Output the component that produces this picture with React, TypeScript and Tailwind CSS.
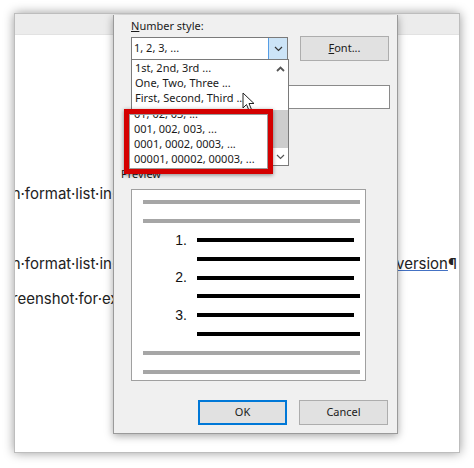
import React from "react";

const LIST_ITEMS = [
  "1st, 2nd, 3rd ...",
  "One, Two, Three ...",
  "First, Second, Third ...",
  "01, 02, 03, ...",
  "001, 002, 003, ...",
  "0001, 0002, 0003, ...",
  "00001, 00002, 00003, ...",
];

const ZOOMED = LIST_ITEMS.slice(3);

function ChevronDown({ className }: { className?: string }) {
  return (
    <svg width="9" height="6" viewBox="0 0 9 6" className={className}>
      <path d="M1 1 L4.5 4.5 L8 1" fill="none" stroke="currentColor" strokeWidth="1.2" />
    </svg>
  );
}

function ChevronUp({ className }: { className?: string }) {
  return (
    <svg width="9" height="6" viewBox="0 0 9 6" className={className}>
      <path d="M1 5 L4.5 1.5 L8 5" fill="none" stroke="currentColor" strokeWidth="1.8" />
    </svg>
  );
}

function Cursor() {
  return (
    <svg width="14" height="20" viewBox="0 0 14 20">
      <path
        d="M1 1 L1 16 L4.5 12.5 L7 18.5 L9.5 17.5 L7 11.5 L12 11.5 Z"
        fill="#fff"
        stroke="#222"
        strokeWidth="1"
        strokeLinejoin="round"
      />
    </svg>
  );
}

// one row in the preview pane: gray text line, or numbered/continuation black line
function PreviewRow({ kind, num }: { kind: "gray" | "num" | "cont"; num?: string }) {
  if (kind === "gray") {
    return (
      <div className="h-[18.8px] flex items-center pl-[11px] pr-[5px]">
        <div className="h-[4px] w-full bg-[#a6a6a6]" />
      </div>
    );
  }
  return (
    <div className="h-[18.8px] flex items-center">
      <span className="w-[65px] text-right pr-[10px] text-[14px] text-[#111] font-['Liberation_Sans',Arial,sans-serif]">
        {num}
      </span>
      <div className={`h-[4px] bg-black ${kind === "num" ? "w-[157px]" : "w-[163px]"}`} />
    </div>
  );
}

function Dialog() {
  return (
    <div className="absolute left-[98px] top-[1px] w-[285px] h-[419px] bg-[#f0f0f0] border-x border-b border-[#9a9a9a] shadow-[0_2px_8px_rgba(0,0,0,0.35)] font-['Noto_Sans',sans-serif] text-[11px] text-[#1a1a1a]">
      <div className="pl-[17px] pt-[1px]">
        <div className="h-[20px] flex items-center">
          <span>
            <span className="underline">N</span>umber style:
          </span>
        </div>

        <div className="flex items-center gap-[12px]">
          <div className="w-[157px] h-[23px] bg-white border border-[#7a7a7a] flex items-stretch">
            <div className="flex-1 flex items-center pl-[2px]">1, 2, 3, ...</div>
            <div className="w-[19px] bg-[#cce4f7] border-l border-[#569de5] flex items-center justify-center text-[#333]">
              <ChevronDown />
            </div>
          </div>
          <div className="w-[89px] h-[25px] bg-[#e1e1e1] border border-[#adadad] flex items-center justify-center">
            <span>
              <span className="underline">F</span>ont...
            </span>
          </div>
        </div>

        <div className="mt-[24px] w-[259px] h-[24px] bg-white border border-[#8a8a8a]" />

        <div className="mt-[57px] -ml-[10px] h-[16px] flex items-center">Preview</div>

        <div className="mt-[7px] w-[235px] h-[192px] bg-white border border-[#a0a0a0] pt-[3px]">
          <PreviewRow kind="gray" />
          <PreviewRow kind="gray" />
          <PreviewRow kind="num" num="1." />
          <PreviewRow kind="cont" />
          <PreviewRow kind="num" num="2." />
          <PreviewRow kind="cont" />
          <PreviewRow kind="num" num="3." />
          <PreviewRow kind="cont" />
          <PreviewRow kind="gray" />
          <PreviewRow kind="gray" />
        </div>

        <div className="mt-[19px] flex justify-end gap-[12px] pr-[9px]">
          <div className="w-[89px] h-[25px] bg-[#e1e1e1] border-2 border-[#0078d7] flex items-center justify-center">
            OK
          </div>
          <div className="w-[89px] h-[25px] bg-[#e1e1e1] border border-[#adadad] flex items-center justify-center">
            Cancel
          </div>
        </div>
      </div>

      {/* open dropdown list */}
      <div className="absolute left-[17px] top-[44px] w-[158px] h-[107px] bg-white border border-[#7a7a7a] flex">
        <div className="flex-1 pl-[3px]">
          {LIST_ITEMS.map((t) => (
            <div key={t} className="h-[15px] leading-[15px] whitespace-nowrap">
              {t}
            </div>
          ))}
        </div>
        <div className="w-[16px] flex flex-col items-center text-[#555]">
          <div className="h-[18px] flex items-center">
            <ChevronUp />
          </div>
          <div className="mt-[32px] h-[38px] w-full bg-[#cdcdcd]" />
          <div className="flex-1 flex items-center">
            <ChevronDown />
          </div>
        </div>
      </div>

      <div className="absolute left-[128px] top-[77px]">
        <Cursor />
      </div>

      {/* red highlight callout */}
      <div className="absolute left-[10px] top-[94px] w-[149px] h-[65px] border-[5px] border-[#d40000] shadow-[0_1px_4px_rgba(0,0,0,0.45)]">
        <div className="w-full h-full bg-white border border-[#9a9a9a] overflow-hidden pl-[4px]">
          <div className="-mt-[9px]">
            {ZOOMED.map((t) => (
              <div key={t} className="h-[15px] leading-[15px] whitespace-nowrap">
                {t}
              </div>
            ))}
          </div>
        </div>
      </div>
    </div>
  );
}

export default function App() {
  return (
    <div className="w-[474px] h-[468px] bg-white pt-[13px] pl-[14px]">
      <div className="relative w-[446px] h-[440px] bg-white border border-[#bdbdbd] shadow-[0_0_10px_rgba(0,0,0,0.4)] overflow-hidden">
        <div className="h-[21px] bg-[#ececec] border-b border-[#e2e2e2]" />
        <div className="pt-[142px] font-['Inter',sans-serif] text-[15px] text-[#222]">
          <div className="h-[35px] flex items-center justify-between whitespace-nowrap">
            <span className="-ml-[7px]">in·format·list·in·Word</span>
          </div>
          <div className="h-[35px]" />
          <div className="h-[35px] flex items-center justify-between whitespace-nowrap">
            <span className="-ml-[7px]">in·format·list·in·Word</span>
            <span className="pr-[2px]">
              <span className="underline decoration-[#4472c4]">conversion</span>¶
            </span>
          </div>
          <div className="h-[34px] flex items-center whitespace-nowrap">
            <span className="-ml-[3px]">reenshot·for·example</span>
          </div>
        </div>
        <Dialog />
      </div>
    </div>
  );
}
